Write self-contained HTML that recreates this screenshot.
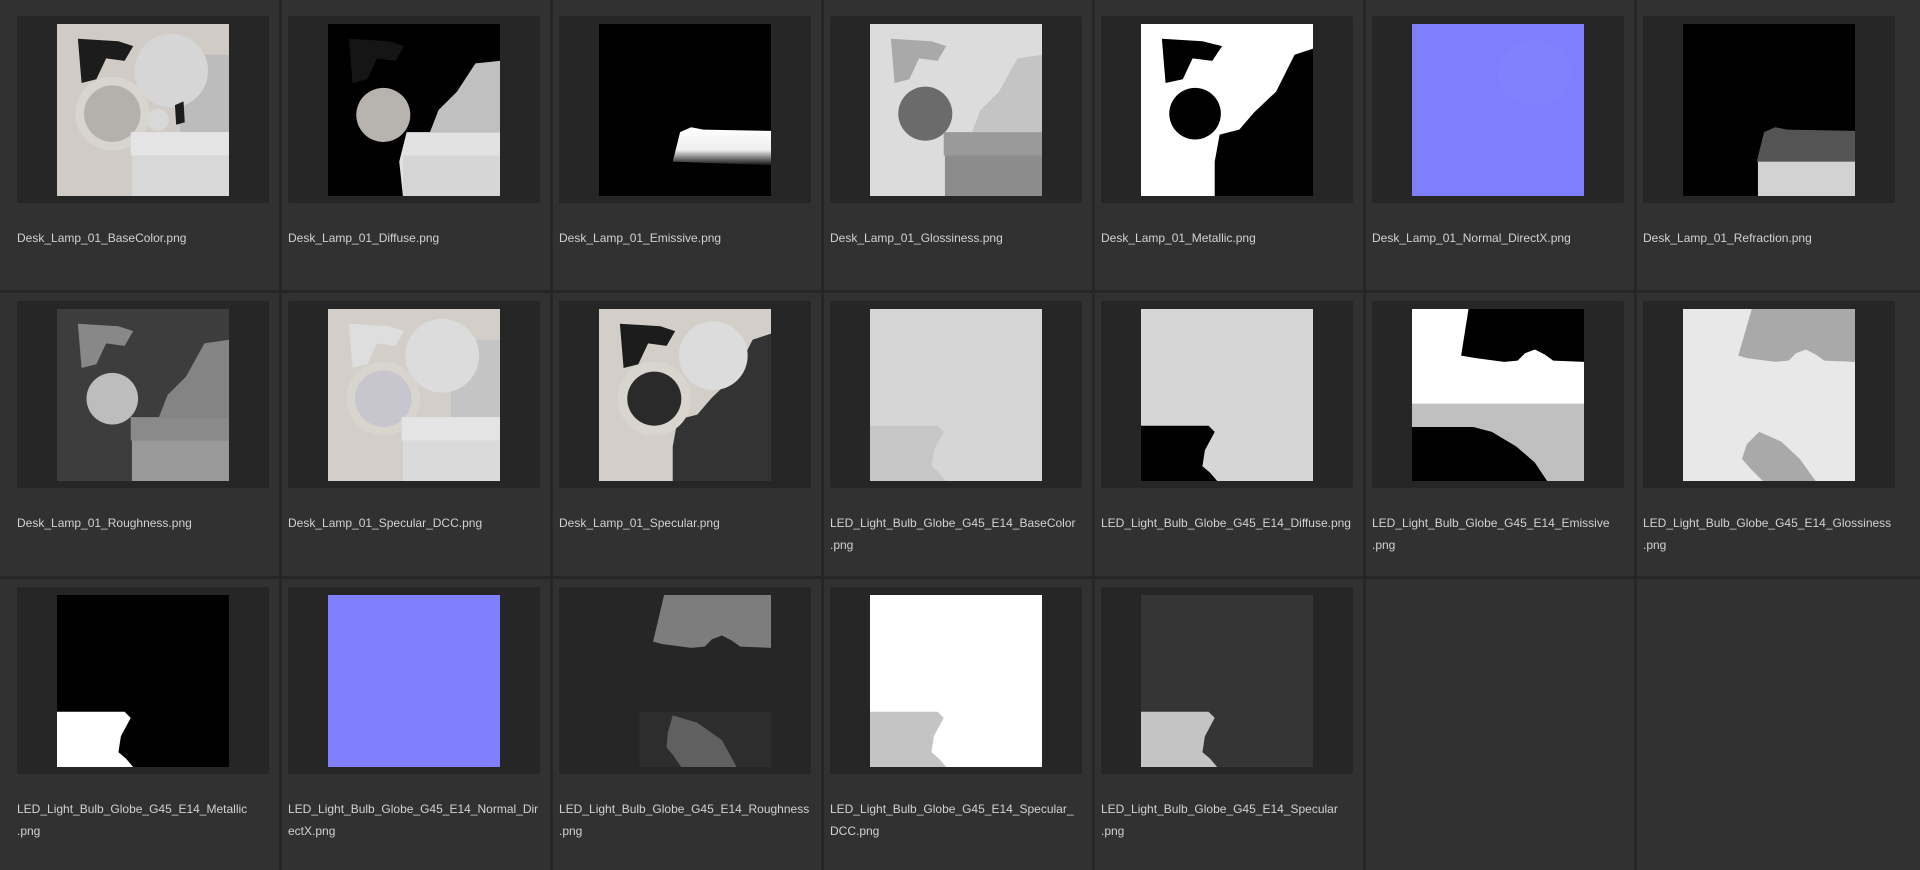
<!DOCTYPE html>
<html><head><meta charset="utf-8"><style>
html,body{margin:0;padding:0;background:#313131;width:1920px;height:870px;overflow:hidden;font-family:"Liberation Sans",sans-serif;}
.vs{position:absolute;top:0;width:3px;height:870px;background:#262626;}
.hs{position:absolute;left:0;width:1920px;height:3px;background:#262626;}
.cell{position:absolute;width:252px;}
.panel{position:absolute;left:0;top:0;width:252px;height:187px;background:#262626;border-radius:2px;}
.panel svg{position:absolute;left:40px;top:8px;width:172px;height:172px;}
.lbl{position:absolute;left:0;top:211px;font-size:12px;line-height:22px;color:#d2d2d2;white-space:nowrap;}
</style></head><body>
<div class="vs" style="left:279px"></div>
<div class="vs" style="left:550px"></div>
<div class="vs" style="left:821px"></div>
<div class="vs" style="left:1092px"></div>
<div class="vs" style="left:1363px"></div>
<div class="vs" style="left:1634px"></div>
<div class="hs" style="top:290px"></div>
<div class="hs" style="top:576px"></div>

<!-- Row 1 -->
<div class="cell" style="left:17px;top:16px"><div class="panel"><svg viewBox="0 0 140 140" preserveAspectRatio="none">
<rect width="140" height="140" fill="#d0ccc5"/>
<rect x="100" y="25" width="40" height="65" fill="#bcbcbc"/>
<circle cx="93" cy="38" r="30" fill="#d6d6d6"/>
<path d="M17 12 L50 14 L62 18 L55 30 L40 28 L32 45 L20 48 Z" fill="#1c1c1c"/>
<circle cx="45" cy="73" r="30" fill="#d8d4ce"/>
<circle cx="45" cy="73" r="23" fill="#b4b1ad"/>
<circle cx="82" cy="78" r="9" fill="#d8d8d8"/>
<path d="M96 66 L103 63 L104 80 L97 82 Z" fill="#1c1c1c"/>
<rect x="60" y="88" width="80" height="19" fill="#e4e4e4"/>
<rect x="61" y="107" width="79" height="33" fill="#d8d8d8"/>
</svg></div><div class="lbl">Desk_Lamp_01_BaseColor.png</div></div>

<div class="cell" style="left:288px;top:16px"><div class="panel"><svg viewBox="0 0 140 140" preserveAspectRatio="none">
<rect width="140" height="140" fill="#000"/>
<path d="M17 12 L50 14 L62 18 L55 30 L40 28 L32 45 L20 48 Z" fill="#151515"/>
<path d="M140 30 L140 88 L83 88 L90 70 L105 55 L120 32 Z" fill="#c0c0c0"/>
<circle cx="45" cy="74" r="22" fill="#b7b3ae"/>
<path d="M58 112 L64 88 L140 88 L140 140 L61 140 Z" fill="#e2e2e2"/>
<rect x="61" y="107" width="79" height="33" fill="#d6d6d6"/>
</svg></div><div class="lbl">Desk_Lamp_01_Diffuse.png</div></div>

<div class="cell" style="left:559px;top:16px"><div class="panel"><svg viewBox="0 0 140 140" preserveAspectRatio="none">
<defs><linearGradient id="eg" x1="0" y1="0" x2="0" y2="1"><stop offset="0" stop-color="#fff"/><stop offset="0.6" stop-color="#eee"/><stop offset="1" stop-color="#111"/></linearGradient></defs>
<rect width="140" height="140" fill="#000"/>
<path d="M66 88 L75 84 L85 86 L140 87 L140 115 L60 112 Z" fill="url(#eg)"/>
</svg></div><div class="lbl">Desk_Lamp_01_Emissive.png</div></div>

<div class="cell" style="left:830px;top:16px"><div class="panel"><svg viewBox="0 0 140 140" preserveAspectRatio="none">
<rect width="140" height="140" fill="#dcdcdc"/>
<path d="M17 12 L50 14 L62 18 L55 30 L40 28 L32 45 L20 48 Z" fill="#a9a9a9"/>
<path d="M140 25 L140 88 L83 88 L90 70 L105 55 L120 28 Z" fill="#c4c4c4"/>
<circle cx="45" cy="73" r="22" fill="#6b6b6b"/>
<rect x="60" y="88" width="80" height="19" fill="#9a9a9a"/>
<rect x="61" y="107" width="79" height="33" fill="#8c8c8c"/>
</svg></div><div class="lbl">Desk_Lamp_01_Glossiness.png</div></div>

<div class="cell" style="left:1101px;top:16px"><div class="panel"><svg viewBox="0 0 140 140" preserveAspectRatio="none">
<rect width="140" height="140" fill="#fff"/>
<path d="M17 12 L50 14 L66 18 L58 30 L42 28 L34 45 L20 48 Z" fill="#000"/>
<circle cx="44" cy="73" r="21" fill="#000"/>
<path d="M140 20 L140 140 L60 140 L60 112 L64 90 L80 86 L92 72 L110 55 L125 25 Z" fill="#000"/>
</svg></div><div class="lbl">Desk_Lamp_01_Metallic.png</div></div>

<div class="cell" style="left:1372px;top:16px"><div class="panel"><svg viewBox="0 0 140 140" preserveAspectRatio="none">
<rect width="140" height="140" fill="#7f7ffe"/>
<ellipse cx="100" cy="40" rx="30" ry="26" fill="#8580fc" opacity="0.7"/>
</svg></div><div class="lbl">Desk_Lamp_01_Normal_DirectX.png</div></div>

<div class="cell" style="left:1643px;top:16px"><div class="panel"><svg viewBox="0 0 140 140" preserveAspectRatio="none">
<rect width="140" height="140" fill="#000"/>
<path d="M66 88 L75 84 L85 86 L140 87 L140 112 L60 112 Z" fill="#545454"/>
<rect x="61" y="112" width="79" height="28" fill="#d2d2d2"/>
</svg></div><div class="lbl">Desk_Lamp_01_Refraction.png</div></div>

<!-- Row 2 -->
<div class="cell" style="left:17px;top:301px"><div class="panel"><svg viewBox="0 0 140 140" preserveAspectRatio="none">
<rect width="140" height="140" fill="#3d3d3d"/>
<path d="M17 12 L50 14 L62 18 L55 30 L40 28 L32 45 L20 48 Z" fill="#888"/>
<path d="M140 25 L140 88 L83 88 L90 70 L105 55 L120 28 Z" fill="#848484"/>
<circle cx="45" cy="73" r="21" fill="#bdbdbd"/>
<rect x="60" y="88" width="80" height="19" fill="#8a8a8a"/>
<rect x="61" y="107" width="79" height="33" fill="#999"/>
</svg></div><div class="lbl">Desk_Lamp_01_Roughness.png</div></div>

<div class="cell" style="left:288px;top:301px"><div class="panel"><svg viewBox="0 0 140 140" preserveAspectRatio="none">
<rect width="140" height="140" fill="#d3cfc8"/>
<rect x="100" y="25" width="40" height="65" fill="#c4c4c4"/>
<circle cx="93" cy="38" r="30" fill="#dcdcdc"/>
<path d="M17 12 L50 14 L62 18 L55 30 L40 28 L32 45 L20 48 Z" fill="#dedede"/>
<circle cx="45" cy="73" r="30" fill="#d8d4ce"/>
<circle cx="45" cy="73" r="23" fill="#c6c6cc"/>
<rect x="60" y="88" width="80" height="19" fill="#e4e4e4"/>
<rect x="61" y="107" width="79" height="33" fill="#dadada"/>
</svg></div><div class="lbl">Desk_Lamp_01_Specular_DCC.png</div></div>

<div class="cell" style="left:559px;top:301px"><div class="panel"><svg viewBox="0 0 140 140" preserveAspectRatio="none">
<rect width="140" height="140" fill="#d3cfc8"/>
<path d="M140 20 L140 140 L60 140 L60 112 L64 90 L80 86 L92 72 L110 55 L125 25 Z" fill="#333"/>
<circle cx="93" cy="38" r="28" fill="#dcdcdc"/>
<path d="M17 12 L50 14 L62 18 L55 30 L40 28 L32 45 L20 48 Z" fill="#1c1c1c"/>
<circle cx="45" cy="73" r="30" fill="#d8d4ce"/>
<circle cx="45" cy="73" r="22" fill="#2a2a2a"/>
</svg></div><div class="lbl">Desk_Lamp_01_Specular.png</div></div>

<div class="cell" style="left:830px;top:301px"><div class="panel"><svg viewBox="0 0 140 140" preserveAspectRatio="none">
<rect width="140" height="140" fill="#d6d6d6"/>
<path d="M0 95 L55 95 L60 100 L52 115 L50 128 L56 133 L62 140 L0 140 Z" fill="#c6c6c6"/>
</svg></div><div class="lbl">LED_Light_Bulb_Globe_G45_E14_BaseColor<br>.png</div></div>

<div class="cell" style="left:1101px;top:301px"><div class="panel"><svg viewBox="0 0 140 140" preserveAspectRatio="none">
<rect width="140" height="140" fill="#d6d6d6"/>
<path d="M0 95 L55 95 L60 100 L52 115 L50 128 L56 133 L62 140 L0 140 Z" fill="#000"/>
</svg></div><div class="lbl">LED_Light_Bulb_Globe_G45_E14_Diffuse.png</div></div>

<div class="cell" style="left:1372px;top:301px"><div class="panel"><svg viewBox="0 0 140 140" preserveAspectRatio="none">
<rect width="140" height="140" fill="#fff"/>
<path d="M46 0 L140 0 L140 43 L115 42 L108 37 L100 33 L92 36 L86 42 L75 43 L52 40 L40 38 Z" fill="#000"/>
<rect x="0" y="77" width="140" height="63" fill="#c0c0c0"/>
<path d="M0 96 L50 96 L65 100 L85 112 L100 125 L110 140 L0 140 Z" fill="#000"/>
</svg></div><div class="lbl">LED_Light_Bulb_Globe_G45_E14_Emissive<br>.png</div></div>

<div class="cell" style="left:1643px;top:301px"><div class="panel"><svg viewBox="0 0 140 140" preserveAspectRatio="none">
<rect width="140" height="140" fill="#e8e8e8"/>
<path d="M56 0 L140 0 L140 43 L115 42 L108 37 L100 33 L92 36 L86 42 L75 43 L52 40 L45 38 Z" fill="#a9a9a9"/>
<path d="M62 100 L80 108 L95 122 L108 140 L65 140 L55 130 L48 122 L52 110 Z" fill="#a9a9a9"/>
</svg></div><div class="lbl">LED_Light_Bulb_Globe_G45_E14_Glossiness<br>.png</div></div>

<!-- Row 3 -->
<div class="cell" style="left:17px;top:587px"><div class="panel"><svg viewBox="0 0 140 140" preserveAspectRatio="none">
<rect width="140" height="140" fill="#000"/>
<path d="M0 95 L55 95 L60 100 L52 115 L50 128 L56 133 L62 140 L0 140 Z" fill="#fff"/>
</svg></div><div class="lbl">LED_Light_Bulb_Globe_G45_E14_Metallic<br>.png</div></div>

<div class="cell" style="left:288px;top:587px"><div class="panel"><svg viewBox="0 0 140 140" preserveAspectRatio="none">
<rect width="140" height="140" fill="#8080fe"/>
</svg></div><div class="lbl">LED_Light_Bulb_Globe_G45_E14_Normal_Dir<br>ectX.png</div></div>

<div class="cell" style="left:559px;top:587px"><div class="panel"><svg viewBox="0 0 140 140" preserveAspectRatio="none">
<rect width="140" height="140" fill="#262626"/>
<path d="M53 0 L140 0 L140 43 L115 42 L108 37 L100 33 L92 36 L86 42 L75 43 L52 40 L44 38 Z" fill="#7d7d7d"/>
<rect x="33" y="95" width="107" height="45" fill="#2d2d2d"/>
<path d="M60 98 L80 104 L100 118 L112 140 L67 140 L60 130 L55 124 L56 112 Z" fill="#606060"/>
</svg></div><div class="lbl">LED_Light_Bulb_Globe_G45_E14_Roughness<br>.png</div></div>

<div class="cell" style="left:830px;top:587px"><div class="panel"><svg viewBox="0 0 140 140" preserveAspectRatio="none">
<rect width="140" height="140" fill="#fff"/>
<path d="M0 95 L55 95 L60 100 L52 115 L50 128 L56 133 L62 140 L0 140 Z" fill="#c4c4c4"/>
</svg></div><div class="lbl">LED_Light_Bulb_Globe_G45_E14_Specular_<br>DCC.png</div></div>

<div class="cell" style="left:1101px;top:587px"><div class="panel"><svg viewBox="0 0 140 140" preserveAspectRatio="none">
<rect width="140" height="140" fill="#353535"/>
<path d="M0 95 L55 95 L60 100 L52 115 L50 128 L56 133 L62 140 L0 140 Z" fill="#c4c4c4"/>
</svg></div><div class="lbl">LED_Light_Bulb_Globe_G45_E14_Specular<br>.png</div></div>
</body></html>
